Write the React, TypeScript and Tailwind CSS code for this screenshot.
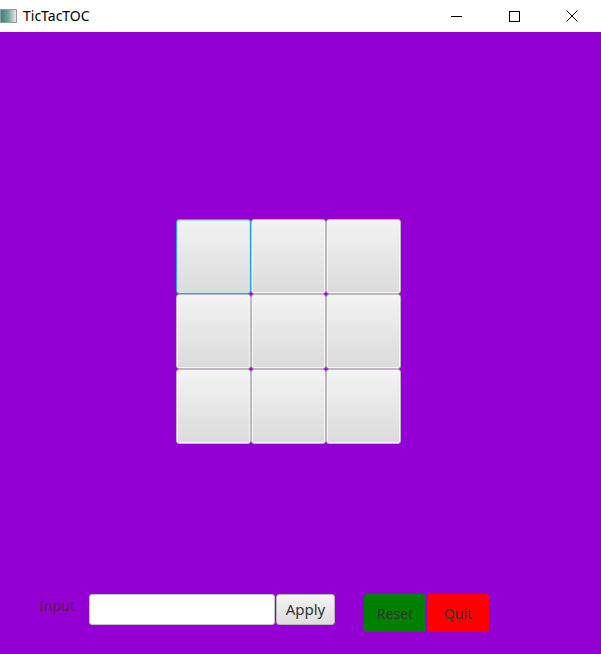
import React from 'react';

const font = { fontFamily: '"Segoe UI", "Noto Sans", "Open Sans", sans-serif' };

function Cell({ selected }: { selected?: boolean }) {
  return (
    <button
      className={`w-[75px] h-[75px] rounded-[3px] bg-gradient-to-b from-[#f3f3f3] to-[#dbdbdb] border ${
        selected ? 'border-[#2ea6e6] shadow-[inset_0_0_0_1px_#bfe3f5]' : 'border-[#bfb5c0] shadow-[inset_0_0_0_1px_#f6f6f6]'
      }`}
    />
  );
}

export default function App() {
  return (
    <div className="w-[601px] h-[654px] flex flex-col" style={font}>
      {/* Title bar */}
      <div className="h-[32px] bg-white flex items-center shrink-0">
        <div className="w-[17px] h-[14px] border border-[#9a9a9a] bg-gradient-to-r from-[#3f7f7f] via-[#6fa8a0] to-[#e8e8e8]" />
        <span className="ml-[6px] text-[14px] text-black leading-none">TicTacTOC</span>
        <div className="ml-auto flex items-center h-full">
          <div className="w-[58px] h-full flex items-center justify-center">
            <div className="w-[11px] h-px bg-black" />
          </div>
          <div className="w-[58px] h-full flex items-center justify-center">
            <div className="w-[11px] h-[11px] border border-black" />
          </div>
          <div className="w-[58px] h-full flex items-center justify-center">
            <svg width="12" height="12" viewBox="0 0 12 12">
              <path d="M0.5 0.5 L11.5 11.5 M11.5 0.5 L0.5 11.5" stroke="black" strokeWidth="1" />
            </svg>
          </div>
        </div>
      </div>

      {/* Board area */}
      <div className="flex-1 bg-[#9400d3] flex flex-col">
        <div className="pl-[176px] pt-[187px]">
          <div className="grid grid-cols-[75px_75px_75px] grid-rows-[75px_75px_76px] w-[225px]">
            <Cell selected />
            <Cell />
            <Cell />
            <Cell />
            <Cell />
            <Cell />
            <Cell />
            <Cell />
            <Cell />
          </div>
        </div>

        {/* Controls */}
        <div className="mt-[149px] flex items-start pl-[39px]">
          <span className="mt-[1px] text-[14px] text-[#5b1f48] w-[50px]">Input</span>
          <input
            className="w-[186px] h-[31px] bg-white rounded-[3px] border border-[#c9c0c9] outline-none px-2 text-[14px]"
            style={font}
          />
          <button className="ml-px w-[59px] h-[31px] rounded-[3px] bg-gradient-to-b from-[#f4f4f4] to-[#dddddd] border border-[#b9b2b9] text-[15px] text-[#333]">
            Apply
          </button>
          <button className="ml-[29px] w-[62px] h-[38px] rounded-[3px] bg-[#008000] text-[14px] text-[#333]">
            Reset
          </button>
          <button className="ml-px w-[62px] h-[38px] rounded-[3px] bg-[#ff0000] text-[14px] text-[#333]">
            Quit
          </button>
        </div>
      </div>
    </div>
  );
}
